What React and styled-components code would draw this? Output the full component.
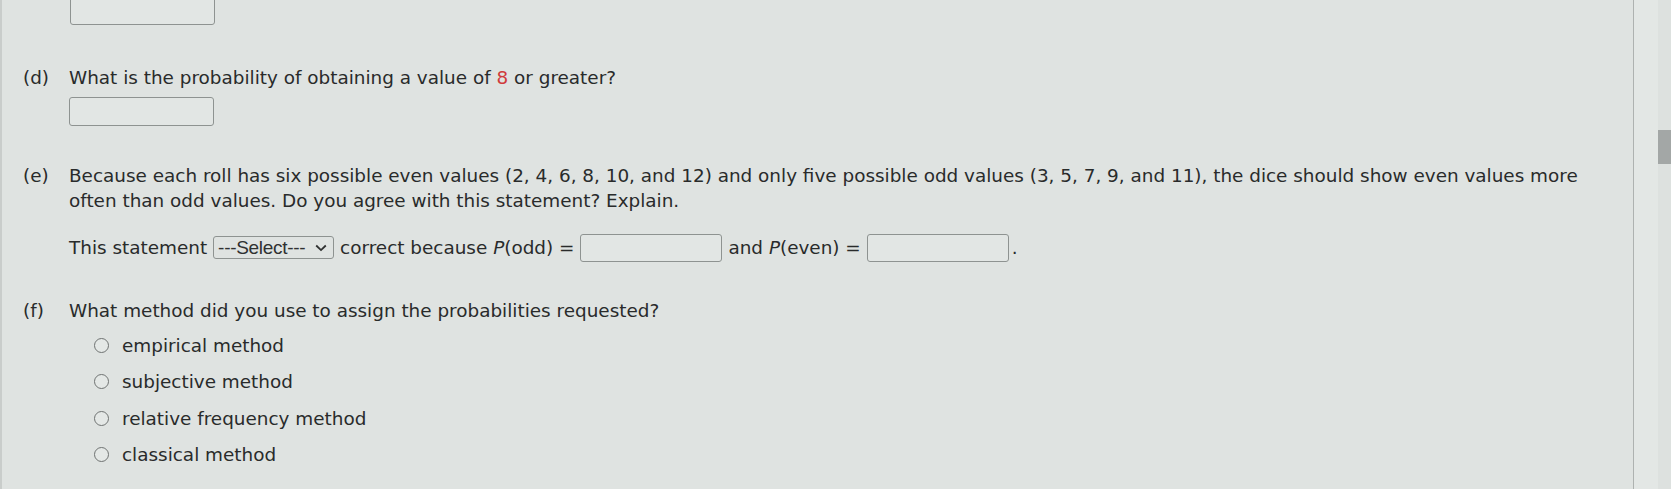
import styled, { createGlobalStyle } from "styled-components";

const GlobalStyle = createGlobalStyle`
  html, body {
    margin: 0;
    padding: 0;
    background: #dfe3e1;
  }
  body {
    font-family: "DejaVu Sans", Verdana, sans-serif;
    color: #292b2b;
  }
`;

const Page = styled.div`
  width: 1671px;
  height: 489px;
  display: flex;
  overflow: hidden;
  background: #dfe3e1;
  border-left: 2px solid #c9cdcb;
  box-sizing: border-box;
`;

const Content = styled.main`
  flex: 1;
  padding-left: 21px;
  display: flex;
  flex-direction: column;
  font-size: 18.4px;
  line-height: 25px;
`;

const Gutter = styled.div`
  width: 24px;
  border-left: 1px solid #aeb2b0;
  background: #e3e7e5;
`;

const Scrollbar = styled.div`
  width: 13px;
  background: #dde1df;
  padding-top: 130px;
`;

const Thumb = styled.div`
  height: 34px;
  background: #a3a7a6;
`;

const AnswerBox = styled.div`
  width: 145px;
  height: 29px;
  box-sizing: border-box;
  border: 1px solid #8e9391;
  border-radius: 3px;
  background: #e2e6e4;
  margin-top: ${(p) => p.$top || 0}px;
  margin-left: ${(p) => p.$left || 0}px;
`;

const Question = styled.section`
  display: grid;
  grid-template-columns: 46px 1fr;
  margin-top: ${(p) => p.$top}px;
`;

const Label = styled.span``;

const Body = styled.div`
  display: flex;
  flex-direction: column;
`;

const Red = styled.span`
  color: #d03a3a;
`;

const Paragraph = styled.p`
  margin: 0;
  max-width: 1535px;
`;

const Sentence = styled.div`
  display: flex;
  align-items: center;
  gap: 6px;
  margin-top: 20px;
  height: 29px;
`;

const Var = styled.i`
  font-style: italic;
`;

const Select = styled.div`
  display: flex;
  align-items: center;
  justify-content: space-between;
  width: 121px;
  height: 23px;
  box-sizing: border-box;
  padding: 0 6px 0 4px;
  border: 1px solid #8e9391;
  border-radius: 3px;
  font-family: "Liberation Sans", Arial, sans-serif;
  font-size: 19px;
  letter-spacing: -0.3px;
  color: #2f3131;
`;

const SmallInput = styled(AnswerBox)`
  width: 142px;
  height: 28px;
`;

const Period = styled.span`
  margin-left: -3px;
`;

const Options = styled.div`
  display: flex;
  flex-direction: column;
  margin-top: 4px;
  margin-left: 25px;
`;

const Option = styled.label`
  display: flex;
  align-items: center;
  gap: 13px;
  height: 36.5px;
`;

const Radio = styled.span`
  width: 15px;
  height: 15px;
  box-sizing: border-box;
  border: 1.5px solid #6f7372;
  border-radius: 50%;
  background: #e4e8e6;
`;

export default function App() {
  const methods = [
    "empirical method",
    "subjective method",
    "relative frequency method",
    "classical method",
  ];

  return (
    <>
      <GlobalStyle />
      <Page>
        <Content>
          <AnswerBox $top={-4} $left={47} />

          <Question $top={40}>
            <Label>(d)</Label>
            <Body>
              <Paragraph>
                What is the probability of obtaining a value of <Red>8</Red> or
                greater?
              </Paragraph>
              <AnswerBox $top={7} />
            </Body>
          </Question>

          <Question $top={37}>
            <Label>(e)</Label>
            <Body>
              <Paragraph>
                Because each roll has six possible even values (2, 4, 6, 8, 10,
                and 12) and only five possible odd values (3, 5, 7, 9, and 11),
                the dice should show even values more often than odd values. Do
                you agree with this statement? Explain.
              </Paragraph>
              <Sentence>
                <span>This statement</span>
                <Select>
                  <span>---Select---</span>
                  <svg width="12" height="8" viewBox="0 0 12 8" fill="none">
                    <path
                      d="M1.2 1.5l4.8 4.6 4.8-4.6"
                      stroke="#2f3131"
                      strokeWidth="1.8"
                    />
                  </svg>
                </Select>
                <span>
                  correct because <Var>P</Var>(odd) =
                </span>
                <SmallInput />
                <span>
                  and <Var>P</Var>(even) =
                </span>
                <SmallInput />
                <Period>.</Period>
              </Sentence>
            </Body>
          </Question>

          <Question $top={36}>
            <Label>(f)</Label>
            <Body>
              <Paragraph>
                What method did you use to assign the probabilities requested?
              </Paragraph>
              <Options>
                {methods.map((m) => (
                  <Option key={m}>
                    <Radio />
                    <span>{m}</span>
                  </Option>
                ))}
              </Options>
            </Body>
          </Question>
        </Content>
        <Gutter />
        <Scrollbar>
          <Thumb />
        </Scrollbar>
      </Page>
    </>
  );
}
